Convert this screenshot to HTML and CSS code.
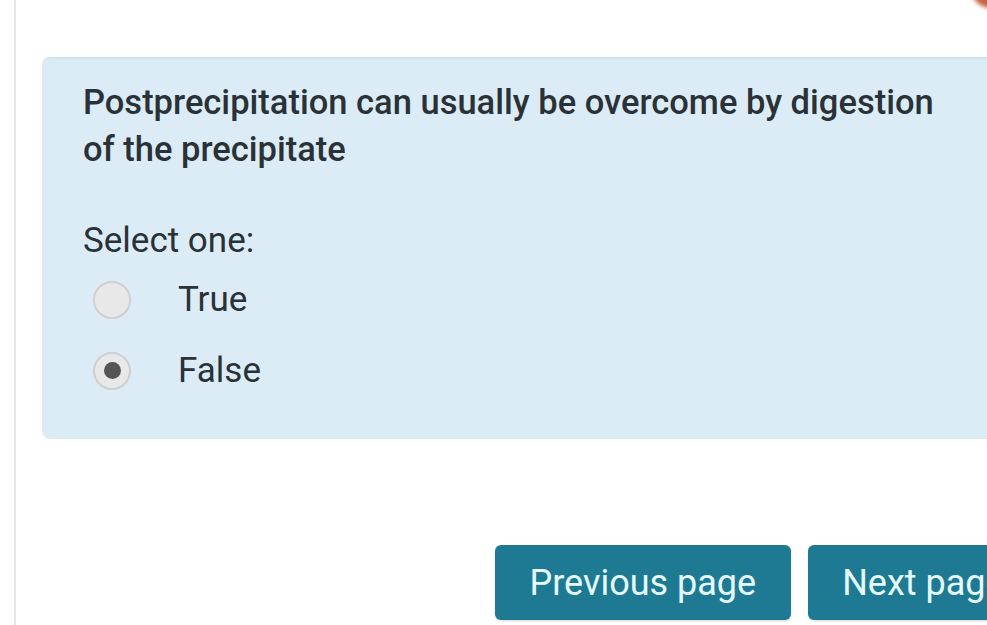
FILE: index.html
```html
<!DOCTYPE html>
<html lang="en">
<head>
  <meta charset="UTF-8">
  <meta name="viewport" content="width=device-width, initial-scale=1.0">
  <title>Quiz</title>
  <link rel="stylesheet" href="styles.css">
</head>
<body>
  <span class="corner-badge"></span>
  <div class="page">
    <div class="question">
      <p class="qtext">Postprecipitation can usually be overcome by digestion of the precipitate</p>
      <p class="prompt">Select one:</p>
      <label class="answer">
        <input type="radio" name="q1" value="1">
        <span>True</span>
      </label>
      <label class="answer">
        <input type="radio" name="q1" value="0" checked>
        <span>False</span>
      </label>
    </div>

    <div class="nav-buttons">
      <button class="btn">Previous page</button>
      <button class="btn">Next page</button>
    </div>
  </div>
</body>
</html>
```

FILE: styles.css
```css
html, body {
  margin: 0;
  padding: 0;
  height: 100%;
  overflow: hidden;
  background-color: #fff;
}

body {
  font-family: Roboto, "Noto Sans", sans-serif;
  color: #2a3137;
}

.page {
  margin-left: 14px;
  border-left: 2px solid #e6e6e6;
  padding: 57px 0 0 26px;
  width: 1200px;
  height: 100%;
  box-sizing: border-box;
}

.question {
  width: 1100px;
  background-color: #dbecf6;
  border-top: 2px solid #d0e2ed;
  border-radius: 8px;
  padding: 20px 0 33px 41px;
  box-sizing: border-box;
}

.qtext {
  margin: 0;
  width: 880px;
  font-size: 34.5px;
  font-weight: 500;
  line-height: 47px;
}

.prompt {
  margin: 48px 0 3px;
  font-size: 35px;
  line-height: 40px;
}

.answer {
  display: flex;
  align-items: center;
  height: 71px;
  font-size: 35px;
}

.answer input {
  appearance: none;
  margin: 0 47px 0 10px;
  width: 38px;
  height: 38px;
  border-radius: 50%;
  border: 2px solid #cfcfcf;
  background: #e8e8e8;
  box-sizing: border-box;
  display: grid;
  place-items: center;
}

.answer input:checked::before {
  content: "";
  width: 17px;
  height: 17px;
  border-radius: 50%;
  background: #555;
}

.nav-buttons {
  display: flex;
  gap: 17px;
  margin: 106px 0 0 453px;
}

.btn {
  font-family: Roboto, "Noto Sans", sans-serif;
  font-size: 36px;
  color: #e6fbff;
  background-color: #1e7a93;
  border: none;
  border-radius: 6px;
  box-shadow: 0 1px 2px rgba(0, 0, 0, 0.15);
  height: 75px;
  padding: 0 34.5px;
  cursor: pointer;
}

.corner-badge {
  position: absolute;
  top: -32px;
  right: -24px;
  width: 40px;
  height: 40px;
  border-radius: 50%;
  background: #c9603f;
  filter: blur(2px);
}
```
